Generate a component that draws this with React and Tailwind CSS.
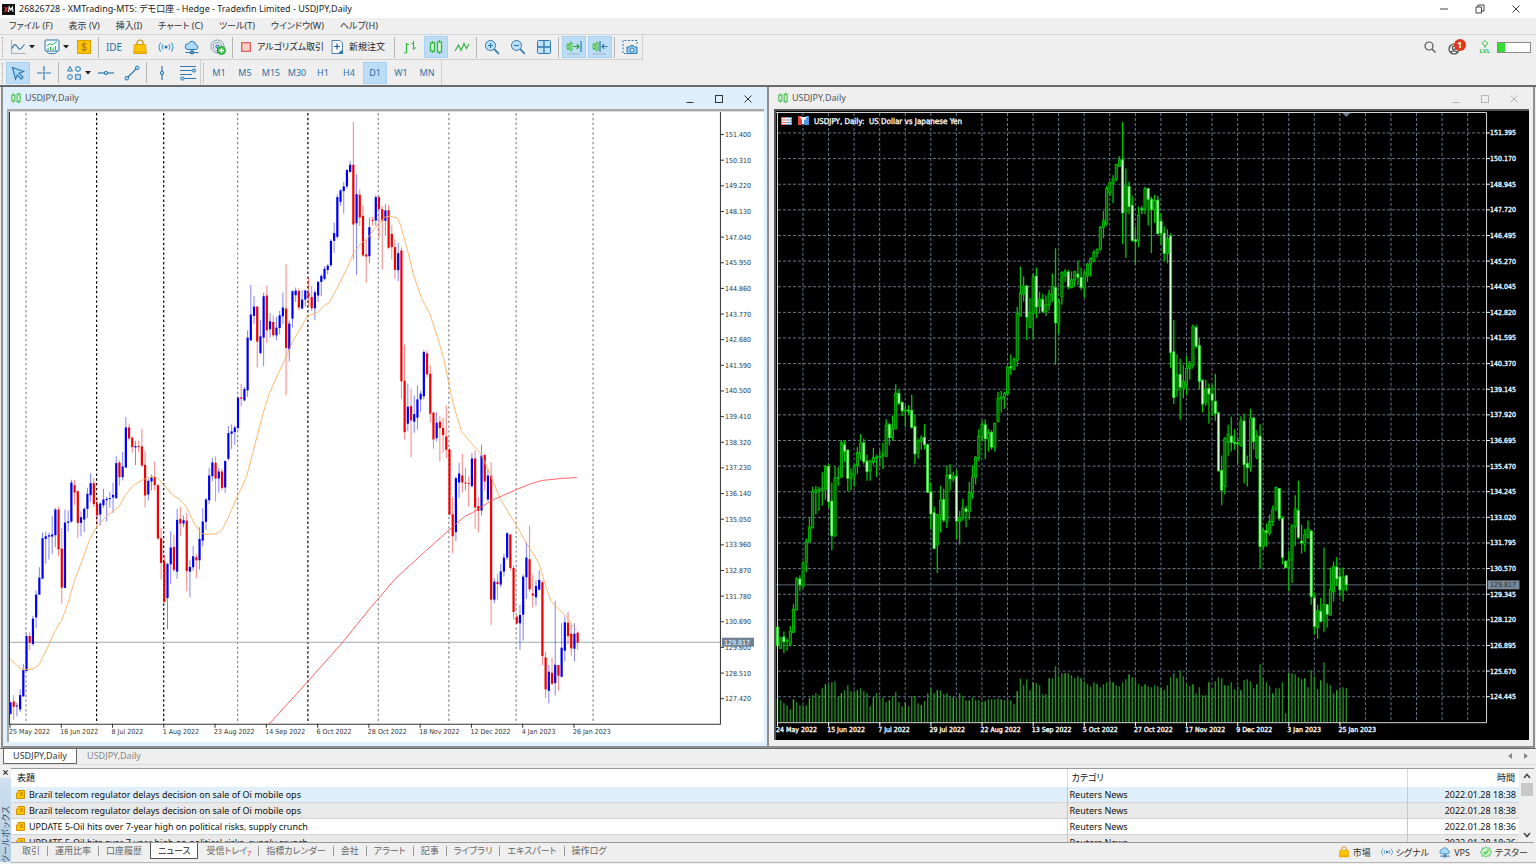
import React, { useState } from "react";

// one row per day, [high, open, close, low] in feed steps (70.5 steps = 1 yen, counted down from 152.44)
const candles = [
  [1731, 1740, 1800, 1811],
  [1773, 1810, 1775, 1810], [1753, 1772, 1788, 1827], [1775, 1787, 1784, 1817], [1735, 1796, 1753, 1804],
  [1660, 1757, 1678, 1757], [1570, 1681, 1576, 1681], [1564, 1576, 1596, 1618], [1515, 1600, 1524, 1605],
  [1440, 1520, 1452, 1553], [1370, 1452, 1401, 1452], [1266, 1404, 1283, 1406], [1263, 1285, 1277, 1359],
  [1266, 1278, 1274, 1347], [1217, 1278, 1272, 1330], [1192, 1274, 1197, 1310], [1189, 1197, 1316, 1337],
  [1252, 1314, 1431, 1479], [1197, 1432, 1236, 1432], [1200, 1237, 1233, 1263], [1108, 1233, 1116, 1237],
  [1108, 1124, 1146, 1183], [1140, 1142, 1237, 1282], [1203, 1237, 1220, 1277], [1190, 1227, 1195, 1265],
  [1132, 1195, 1150, 1222], [1088, 1154, 1118, 1175], [1103, 1118, 1181, 1190], [1159, 1179, 1215, 1245],
  [1175, 1212, 1179, 1245], [1135, 1184, 1167, 1192], [1158, 1169, 1165, 1233], [1143, 1166, 1163, 1192],
  [1117, 1161, 1153, 1207], [1037, 1163, 1058, 1165], [1050, 1056, 1100, 1126], [1025, 1100, 1068, 1110],
  [920, 1071, 951, 1073], [940, 951, 984, 990], [978, 982, 1010, 1027], [991, 1011, 1007, 1064],
  [991, 1007, 1010, 1025], [956, 1008, 1065, 1070], [1022, 1063, 1155, 1191], [1105, 1152, 1111, 1170],
  [1092, 1113, 1101, 1140], [1054, 1099, 1124, 1140], [1120, 1124, 1284, 1287], [1252, 1283, 1357, 1407],
  [1332, 1353, 1474, 1476], [1357, 1462, 1360, 1556], [1262, 1361, 1311, 1420], [1272, 1309, 1378, 1385],
  [1195, 1383, 1228, 1405], [1190, 1225, 1239, 1277], [1215, 1239, 1229, 1250], [1208, 1230, 1381, 1442],
  [1347, 1383, 1369, 1460], [1306, 1370, 1337, 1380], [1330, 1340, 1349, 1402], [1250, 1349, 1285, 1377],
  [1193, 1290, 1233, 1307], [1162, 1234, 1167, 1258], [1072, 1169, 1095, 1180], [1042, 1097, 1056, 1112],
  [1038, 1057, 1104, 1173], [1072, 1104, 1083, 1147], [1075, 1083, 1132, 1140], [1049, 1131, 1052, 1147],
  [946, 1045, 968, 1050], [942, 970, 963, 1015], [945, 965, 951, 1003], [858, 953, 862, 960],
  [820, 861, 865, 888], [830, 870, 836, 873], [660, 840, 682, 860], [524, 690, 613, 692],
  [557, 617, 589, 642], [587, 589, 694, 772], [630, 728, 678, 732], [547, 682, 558, 767],
  [527, 556, 660, 698], [608, 657, 633, 682], [615, 635, 675, 680], [620, 675, 652, 690],
  [602, 653, 615, 672], [547, 618, 592, 642], [462, 595, 713, 855], [632, 717, 640, 753],
  [540, 625, 543, 652], [532, 555, 541, 575], [534, 542, 592, 600], [540, 595, 568, 597],
  [538, 568, 541, 590], [503, 549, 559, 587], [528, 560, 594, 603], [538, 594, 546, 629],
  [512, 556, 515, 575], [492, 515, 497, 557], [468, 506, 476, 510], [462, 479, 466, 493],
  [387, 465, 392, 470], [337, 392, 369, 428], [253, 380, 261, 385], [237, 275, 241, 287],
  [216, 243, 229, 310], [177, 229, 180, 235], [152, 186, 164, 187], [36, 164, 343, 448],
  [193, 339, 252, 495], [237, 254, 322, 348], [285, 317, 436, 440], [388, 433, 439, 518],
  [322, 438, 351, 459], [320, 329, 332, 347], [255, 331, 261, 347], [258, 261, 297, 385],
  [288, 297, 332, 478], [282, 332, 301, 377], [285, 300, 413, 416], [345, 371, 411, 448],
  [388, 411, 479, 506], [398, 480, 429, 513], [412, 421, 813, 865], [703, 811, 965, 987],
  [820, 940, 889, 962], [835, 887, 930, 1040], [855, 934, 911, 967], [825, 922, 867, 957],
  [842, 867, 850, 905], [719, 858, 725, 867], [720, 729, 792, 800], [765, 790, 910, 937],
  [903, 907, 987, 1015], [905, 983, 937, 993], [918, 934, 953, 1053], [922, 953, 974, 1027],
  [885, 978, 1018, 1043], [1013, 1017, 1212, 1215], [1160, 1211, 1277, 1328], [1098, 1265, 1103, 1292],
  [1057, 1116, 1089, 1162], [1030, 1095, 1116, 1147], [1072, 1116, 1119, 1141], [1098, 1118, 1121, 1188],
  [1028, 1127, 1044, 1131], [1020, 1044, 1191, 1255], [1160, 1187, 1201, 1265], [1003, 1200, 1035, 1215],
  [1030, 1034, 1113, 1140], [1076, 1167, 1095, 1173], [1055, 1095, 1467, 1543], [1403, 1467, 1413, 1478],
  [1390, 1414, 1420, 1467], [1359, 1422, 1382, 1430], [1329, 1383, 1341, 1398], [1265, 1341, 1268, 1348],
  [1270, 1272, 1372, 1380], [1365, 1372, 1504, 1527], [1513, 1518, 1538, 1540], [1482, 1538, 1513, 1618],
  [1391, 1512, 1398, 1590], [1294, 1400, 1341, 1465], [1245, 1346, 1436, 1443], [1393, 1449, 1455, 1491],
  [1408, 1460, 1426, 1485], [1379, 1437, 1408, 1440], [1410, 1415, 1636, 1663], [1623, 1640, 1736, 1762],
  [1663, 1740, 1683, 1778], [1640, 1686, 1719, 1723], [1470, 1717, 1662, 1754], [1662, 1663, 1695, 1740],
  [1538, 1698, 1611, 1700], [1518, 1620, 1535, 1652], [1503, 1536, 1576, 1600], [1541, 1569, 1613, 1635],
  [1538, 1614, 1569, 1652], [1562, 1566, 1596, 1618],
];

const volumes = [
  24, 22, 19, 17, 13, 23, 20, 17, 17, 17, 24, 27, 29, 27, 34, 38, 38, 40, 41, 26, 29, 32, 37, 31, 31, 32, 34, 31, 29, 16,
  25, 29, 23, 25, 20, 22, 26, 30, 20, 16, 20, 16, 26, 26, 19, 17, 21, 29, 34, 29, 32, 32, 28, 29, 26, 25, 23, 29, 26, 22,
  22, 25, 22, 22, 21, 21, 23, 23, 23, 24, 23, 22, 23, 22, 18, 31, 44, 37, 43, 32, 40, 39, 37, 28, 28, 44, 44, 56, 46, 49,
  49, 49, 47, 44, 46, 44, 41, 38, 36, 40, 38, 35, 38, 40, 42, 40, 37, 36, 40, 43, 48, 45, 42, 38, 36, 38, 36, 35, 37, 36,
  34, 32, 37, 45, 49, 44, 52, 46, 39, 36, 38, 29, 35, 27, 27, 40, 34, 41, 45, 44, 37, 37, 40, 33, 36, 32, 42, 43, 41, 34,
  38, 58, 44, 40, 36, 29, 34, 34, 40, 9, 49, 49, 48, 45, 43, 44, 35, 52, 46, 33, 42, 60, 39, 37, 29, 32, 34, 35, 34,
];

const fastAverage =
  "1,547 8,554 14,558 24,557 30,553 38,537 46,519 53,508 59,491 66,467 73,449 81,427 88,415 98,404 110,395 116,384 124,374 134,368 143,365 148,366 155,374 164,384 171,388 178,397 184,410 191,421 196,423 208,422 213,418 219,406 228,385 237,366 243,343 254,301 260,282 269,262 276,247 284,229 298,205 308,201 314,195 320,191 328,176 338,156 344,142 351,133 359,126 368,114 375,106 381,105 388,107 391,114 398,139 404,164 412,187 420,202 428,226 434,247 439,271 444,294 452,320 461,331 471,342 478,357 483,369 491,388 508,416 517,432 529,451 535,471 541,489 546,495 557,505 562,513 567,518";
const slowAverage =
  "260,612 291,578 332,532 362,495 386,467 411,444 440,418 455,405 463,401 482,389 507,378 519,373 532,369 552,367 567,366";

const leftDates = ["25 May 2022", "16 Jun 2022", "8 Jul 2022", "1 Aug 2022", "23 Aug 2022", "14 Sep 2022", "6 Oct 2022", "28 Oct 2022", "18 Nov 2022", "12 Dec 2022", "4 Jan 2023", "26 Jan 2023"];
const rightDates = ["24 May 2022", "15 Jun 2022", "7 Jul 2022", "29 Jul 2022", "22 Aug 2022", "13 Sep 2022", "5 Oct 2022", "27 Oct 2022", "17 Nov 2022", "9 Dec 2022", "3 Jan 2023", "25 Jan 2023"];

const monthLines = [
  { x: 17, dark: false }, { x: 87.5, dark: true }, { x: 154.5, dark: true }, { x: 228.3, dark: false }, { x: 298.5, dark: true },
  { x: 368.8, dark: false }, { x: 439.3, dark: false }, { x: 506.5, dark: false }, { x: 583.3, dark: false },
];

const news = [
  { title: "Brazil telecom regulator delays decision on sale of Oi mobile ops", time: "2022.01.28 18:38", row: "bg-[#dfeffc]" },
  { title: "Brazil telecom regulator delays decision on sale of Oi mobile ops", time: "2022.01.28 18:38", row: "bg-[#e9e9e9]" },
  { title: "UPDATE 5-Oil hits over 7-year high on political risks, supply crunch", time: "2022.01.28 18:36", row: "bg-white" },
  { title: "UPDATE 5-Oil hits over 7-year high on political risks, supply crunch", time: "2022.01.28 18:36", row: "bg-[#e9e9e9]" },
];

const menus = ["ファイル (F)", "表示 (V)", "挿入(I)", "チャート (C)", "ツール(T)", "ウインドウ(W)", "ヘルプ(H)"];
const frames = ["M1", "M5", "M15", "M30", "H1", "H4", "D1", "W1", "MN"];
const panels = ["取引", "運用比率", "口座履歴", "ニュース", "受信トレイ", "指標カレンダー", "会社", "アラート", "記事", "ライブラリ", "エキスパート", "操作ログ"];
const steps = Array.from({ length: 23 }, (_, i) => i);

const BLUE = "#2f78b0";

function Icon({ children, size = "size-4" }) {
  return (
    <svg viewBox="0 0 16 16" className={`${size} shrink-0`} fill="none" stroke={BLUE} strokeWidth="1" aria-hidden="true">
      {children}
    </svg>
  );
}

const Bag = ({ size }) => (
  <Icon size={size}>
    <path d="M5 6V4a3 3 0 0 1 6 0v2" stroke="#d08a10" strokeWidth="1.2" />
    <path d="M2.5 5.5h11l.8 9H1.7z" fill="#fdc400" stroke="#e2a000" />
    <path d="M3 12.8h10.5" stroke="#f0a800" />
  </Icon>
);
const Signal = ({ size }) => (
  <Icon size={size}>
    <circle cx="8" cy="8" r="1.6" fill={BLUE} stroke="none" />
    <path d="M5.3 5.3a4 4 0 0 0 0 5.4M10.7 5.3a4 4 0 0 1 0 5.4M2.8 3.5a6.6 6.6 0 0 0 0 9M13.2 3.5a6.6 6.6 0 0 1 0 9" stroke="#4a9bd0" strokeWidth="1.1" />
  </Icon>
);
const Cloud = ({ size }) => (
  <Icon size={size}>
    <path d="M4 10.5a2.9 2.9 0 0 1 .2-5.8 4 4 0 0 1 7.6 1 2.5 2.5 0 0 1 .4 4.8z" fill="#a9dcfa" />
    <path d="M8 10.5v3M1.5 13.5h13" strokeWidth="1.2" />
    <rect x="6.5" y="12.3" width="3" height="2.4" fill="#5aa6d8" />
  </Icon>
);
const Candle = ({ size, color = "#35b83f" }) => (
  <Icon size={size}>
    <g stroke={color} strokeWidth="1.3">
      <path d="M4.5 2v2M4.5 12v2M11.5 1v2M11.5 13v2" />
      <rect x="2.5" y="4" width="4" height="8" fill="#d8f5d8" />
      <rect x="9.5" y="3" width="4" height="10" fill="#d8f5d8" />
    </g>
  </Icon>
);

function Caret() {
  return (
    <svg viewBox="0 0 6 4" className="h-1 w-1.5 shrink-0" aria-hidden="true">
      <path d="M0 0h6L3 3.6z" fill="#222" />
    </svg>
  );
}

function Tool({ label, active, wide, children }) {
  return (
    <button
      aria-label={label}
      className={`flex h-[22px] items-center justify-center border ${wide ? "w-8 gap-[3px]" : "w-6"} ${
        active ? "border-[#a9d2f2] bg-[#bddcf5]" : "border-transparent"
      }`}
    >
      {children}
    </button>
  );
}

const Rule = () => <span className="mr-[3px] ml-0.5 h-[21px] w-px bg-[#b4b4b4]" />;
const Grip = () => <span className="ml-0.5 h-5 w-1 border-l border-dotted border-[#a8a8a8]" />;

function TitleBar() {
  return (
    <header className="flex h-[18px] items-center bg-white pr-3.5 pl-0.5 text-[9px] text-[#222]">
      <svg viewBox="0 0 13 11" className="h-[11px] w-[13px]" aria-hidden="true">
        <rect width="13" height="11" fill="#111" />
        <path d="M2.5 3l3 5M5.5 3l-3 5" stroke="#e33" strokeWidth="1.1" />
        <path d="M6.5 8l.7-5 1.6 3 1.6-3 .6 5" stroke="#fff" strokeWidth="1.1" fill="none" />
      </svg>
      <h1 className="ml-1 whitespace-nowrap">26826728 - XMTrading-MT5: デモ口座 - Hedge - Tradexfin Limited - USDJPY,Daily</h1>
      <div className="ml-auto flex gap-6 text-[#444]">
        <WindowGlyph kind="min" label="最小化" />
        <WindowGlyph kind="restore" label="元に戻す" />
        <WindowGlyph kind="close" label="閉じる" />
      </div>
    </header>
  );
}

function WindowGlyph({ kind, label }) {
  return (
    <button aria-label={label} className="flex size-3 items-center justify-center">
      <svg viewBox="0 0 10 10" className="size-[10px]" fill="none" stroke="currentColor" strokeWidth="1" aria-hidden="true">
        {kind === "min" && <path d="M1 5h8" />}
        {kind === "low" && <path d="M1.5 8.5h7" />}
        {kind === "max" && <rect x="1.5" y="1.5" width="7" height="7" />}
        {kind === "restore" && <path d="M1 3h5.5v6H1zM3 3V1h6v6H6.5" />}
        {kind === "close" && <path d="M1.5 1.5l7 7M8.5 1.5l-7 7" />}
      </svg>
    </button>
  );
}

function MainToolbar() {
  return (
    <div className="flex h-[25px] items-start">
      <div className="flex h-[25px] items-center border-r border-b border-[#cfcfcf]">
        <Grip />
        <Tool label="ラインチャート" wide>
          <Icon><path d="M1.5 1v13.5H16" stroke="#a5b0b8" /><path d="M2 9.5c2-5 3.6-5 5.5-1.5s3 2.5 7-2.5" strokeWidth="1.2" /></Icon>
          <Caret />
        </Tool>
        <span className="w-0.5" />
        <Tool label="テンプレート" wide>
          <Icon>
            <rect x="1" y="1" width="14" height="11" rx="1" fill="#eef8ff" />
            <path d="M3 7l3-2.5 2 1.5 5-3.5" stroke="#35b83f" />
            <path d="M4 11V9M6.500 11V8M9 11V8.5M11.500 11V7" stroke="#35b83f" />
            <path d="M2.500 12c1 2 2 2.700 5.500 2.700s4.500-.7 5.500-2.700" />
          </Icon>
          <Caret />
        </Tool>
        <Tool label="マーケット">
          <Icon>
            <rect x="1.5" y="1.5" width="13" height="13" fill="#fdc400" stroke="#e2a000" />
            <path d="M10.500 5.500c-.7-1-4.500-1.300-4.500.7s4.500 1.200 4.500 3.300-4 1.900-5 .6M8 3.200v9.600" stroke="#a86a00" />
          </Icon>
        </Tool>
        <Rule />
        <div className="flex gap-0.5">
          <Tool label="IDE"><span className="text-[10px] text-[#2f6f9f]">IDE</span></Tool>
          <Tool label="ストア"><Bag /></Tool>
          <Tool label="シグナル配信"><Signal /></Tool>
          <Tool label="クラウド"><Cloud /></Tool>
          <Tool label="接続">
            <Icon>
              <circle cx="7.5" cy="7.5" r="6.5" stroke="#7f9fb0" />
              <circle cx="7.5" cy="7.5" r="4.2" stroke="#7f9fb0" />
              <circle cx="7.5" cy="7.5" r="1.7" fill="#7cc4ee" />
              <path d="M7.500 9v5" />
              <circle cx="11.5" cy="11.5" r="4" fill="#3fc24a" stroke="#2aa136" />
              <path d="M11.500 9v5M9 11.500h5" stroke="#fff" strokeWidth="1.3" />
            </Icon>
          </Tool>
        </div>
        <Rule />
        <button className="flex h-[22px] w-[90px] items-center gap-1.5 pl-[5px] text-[9px] whitespace-nowrap text-[#222]">
          <svg viewBox="0 0 10 10" className="size-[10px] shrink-0" aria-hidden="true"><rect x=".7" y=".7" width="8.6" height="8.6" fill="#fbd0cc" stroke="#dc5448" strokeWidth="1.2" /></svg>
          アルゴリズム取引
        </button>
        <button className="flex h-[22px] w-[66px] items-center gap-1 pl-[3px] text-[9px] whitespace-nowrap text-[#222]">
          <Icon>
            <path d="M3 1.500h8l2.500 2.500v10.500H3z" fill="#fff" stroke="#4a86b0" />
            <path d="M8 4.500v6M5 7.500h6" stroke="#2458a8" strokeWidth="1.2" />
            <path d="M9.500 14.500l4-3.500v3.500z" fill="#2f78b0" />
          </Icon>
          新規注文
        </button>
        <Rule />
        <div className="flex gap-0.5">
          <Tool label="バーチャート">
            <Icon><path d="M4.500 4v10M2 14h2.500M4.500 5.500H7M11.500 2v9M9.500 4.500h2M11.500 9H14" stroke="#35b83f" strokeWidth="1.2" /></Icon>
          </Tool>
          <Tool label="ローソク足" active><Candle /></Tool>
          <Tool label="ライン"><Icon><path d="M1 12l3.500-6 2.500 5.500 3-7 2.500 5L15 5" stroke="#35b83f" strokeWidth="1.2" /></Icon></Tool>
        </div>
        <Rule />
        <div className="flex gap-0.5">
          <Tool label="ズームイン">
            <Icon><circle cx="6.5" cy="6.5" r="5" fill="#bfe3fa" /><path d="M10.200 10.200l4.600 4.600" strokeWidth="1.7" /><path d="M6.500 4v5M4 6.500h5" strokeWidth="1.2" /></Icon>
          </Tool>
          <Tool label="ズームアウト">
            <Icon><circle cx="6.5" cy="6.5" r="5" fill="#bfe3fa" /><path d="M10.200 10.200l4.600 4.600" strokeWidth="1.7" /><path d="M4 6.500h5" strokeWidth="1.2" /></Icon>
          </Tool>
          <Tool label="タイル表示">
            <Icon><rect x="1.5" y="1.5" width="13" height="13" rx="1" fill="#bfe3fa" /><path d="M8 1.500v13M1.500 8h13" strokeWidth="1.3" /></Icon>
          </Tool>
        </div>
        <Rule />
        <div className="flex gap-0.5">
          <Tool label="自動スクロール" active>
            <Icon>
              <path d="M2 4v7M5 2.500v10" stroke="#35b83f" />
              <path d="M1 5.500h2v4H1zM4 4h2v7H4z" fill="#d8f5d8" stroke="#35b83f" />
              <path d="M7.500 7.500H13M10.800 5.200L13 7.500l-2.200 2.300" stroke="#25a030" strokeWidth="1.2" />
              <path d="M15 2v11" strokeWidth="1.2" />
              <path d="M1 15h13" stroke="#9db4c4" />
            </Icon>
          </Tool>
          <Tool label="チャートシフト" active>
            <Icon>
              <path d="M2 4v7M5 2.500v10" stroke="#35b83f" />
              <path d="M1 5.500h2v4H1zM4 4h2v7H4z" fill="#d8f5d8" stroke="#35b83f" />
              <path d="M8 2v11" strokeWidth="1.2" />
              <path d="M15.500 7.500H10M12.200 5.200L10 7.500l2.200 2.300" strokeWidth="1.2" />
              <path d="M1 15h13" stroke="#9db4c4" />
            </Icon>
          </Tool>
        </div>
        <Rule />
        <Tool label="スクリーンショット">
          <Icon>
            <path d="M4 14.500H1v-13h14v5" strokeDasharray="2 1.5" />
            <path d="M5 8h2.500l1-1.500h3l1 1.500H15v6.500H5z" fill="#8fcdf3" />
            <circle cx="10" cy="11" r="2" fill="#e8f6ff" />
          </Icon>
        </Tool>
      </div>
      <div className="mt-px mr-[5px] ml-auto flex h-[22px] items-center">
        <button aria-label="検索">
          <svg viewBox="0 0 12 12" className="size-3" fill="none" stroke="#555" strokeWidth="1.2"><circle cx="5" cy="5" r="4" /><path d="M8 8l3.500 3.500" /></svg>
        </button>
        <button aria-label="アカウント" className="relative ml-3 h-4 w-[18px]">
          <svg viewBox="0 0 12 12" className="mt-1 size-3" fill="none" stroke="#444" strokeWidth="1.2"><circle cx="6" cy="6" r="5" /><circle cx="6" cy="4.8" r="1.7" /><path d="M2.500 9.500c1.500-2.300 5.500-2.300 7 0" /></svg>
          <span className="absolute top-0 right-0 flex size-3 items-center justify-center rounded-full bg-[#e03a1e] text-[9px] font-bold text-white">1</span>
        </button>
        <div className="ml-3.5 flex flex-col items-center text-[6px] leading-[6px] font-bold text-[#2fbf3a]">
          <svg viewBox="0 0 8 8" className="size-2" fill="none" stroke="#2fbf3a"><path d="M4 .5L7 3.500 4 6 1 3.500zM4 6v2" /></svg>
          LVL
        </div>
        <div className="ml-[7px] h-[11px] w-[34px] border border-[#888] bg-white">
          <div className="h-full w-[7px] bg-[#35dc35]" />
        </div>
      </div>
    </div>
  );
}

function DrawToolbar() {
  const [frame, setFrame] = useState("D1");
  return (
    <div className="flex h-[25px]">
      <div className="flex items-center border-r border-[#cfcfcf]">
        <Grip />
        <div className="flex gap-0.5">
          <Tool label="カーソル" active>
            <Icon><path d="M2.500 2.500l11 4-4.500 1.800 4 4-1.800 1.800-4-4-1.600 4z" fill="#a9dcfa" strokeWidth="1.2" /></Icon>
          </Tool>
          <Tool label="クロスヘア"><Icon><path d="M8 1v5.500M8 9.500V15M1 8h5.500M9.500 8H15M7 8h2M8 7v2" strokeWidth="1.2" /></Icon></Tool>
        </div>
        <Rule />
        <Tool label="図形" wide>
          <Icon>
            <path d="M4 1.500L6.500 6h-5z" fill="#cfeafc" />
            <circle cx="12" cy="4" r="2.4" fill="#cfeafc" />
            <circle cx="4" cy="12" r="2.4" fill="#cfeafc" />
            <rect x="9.7" y="9.7" width="4.6" height="4.6" fill="#cfeafc" />
          </Icon>
          <Caret />
        </Tool>
        <div className="flex gap-0.5">
          <Tool label="水平線"><Icon><path d="M0 8h16" strokeWidth="1.2" /><circle cx="8" cy="8" r="1.7" fill="#a9dcfa" /></Icon></Tool>
          <Tool label="トレンドライン"><Icon><path d="M3 13L13 3" strokeWidth="1.2" /><circle cx="13.2" cy="2.8" r="1.8" fill="#a9dcfa" /><circle cx="2.8" cy="13.2" r="1.8" fill="#a9dcfa" /></Icon></Tool>
        </div>
        <Rule />
        <div className="flex gap-0.5">
          <Tool label="垂直線"><Icon><path d="M8 1v14" strokeWidth="1.2" /><circle cx="8" cy="8" r="1.7" fill="#a9dcfa" /></Icon></Tool>
          <Tool label="フィボナッチ">
            <Icon><path d="M0 1.500h16M0 5.500h16M0 9.500h12M0 13.500h16" /><circle cx="14" cy="5.5" r="1.6" fill="#a9dcfa" /><circle cx="2.5" cy="13.5" r="1.6" fill="#a9dcfa" /></Icon>
          </Tool>
        </div>
        <span className="h-full w-px bg-[#cfcfcf]" />
        <Grip />
        <div className="flex gap-0.5 pr-0.5">
          {frames.map((f) => (
            <button
              key={f}
              onClick={() => setFrame(f)}
              className={`h-[22px] w-6 border text-center text-[9px] text-[#2f6f9f] ${
                f === frame ? "border-[#a9d2f2] bg-[#bddcf5]" : "border-transparent"
              }`}
            >
              {f}
            </button>
          ))}
        </div>
      </div>
    </div>
  );
}

function ChartWindow({ active, children }) {
  return (
    <section className={`min-w-0 flex-1 border-r-2 border-b-2 border-[#8f8f8f] pb-1 ${active ? "border-l-2 bg-[#dfeffc]" : "bg-[#efefef]"}`}>
      <div className={`flex h-[22px] items-center pr-[13px] text-[9px] text-[#555] ${active ? "pl-[7px]" : "pl-2"}`}>
        <Candle size="size-3" />
        <h2 className="ml-[3px]">USDJPY,Daily</h2>
        <div className={`ml-auto flex gap-[17px] pt-0.5 ${active ? "text-[#333]" : "text-[#b5b5b5]"}`}>
          <WindowGlyph kind="low" label="最小化" />
          <WindowGlyph kind="max" label="最大化" />
          <WindowGlyph kind="close" label="閉じる" />
        </div>
      </div>
      <div className={`border-t-2 border-l-2 ${active ? "mr-[3px] ml-1 border-[#a8a8a8]" : "mr-1 ml-[5px] border-[#555]"}`}>{children}</div>
    </section>
  );
}

function LightChart() {
  const y = (v) => v / 3 - 1;
  return (
    <svg viewBox="0 0 754 630" className="block h-auto w-full bg-white text-[7px]" role="img" aria-label="USDJPY 日足 明色">
      {monthLines.map((l) => (
        <path key={l.x} d={`M${l.x} 2V612`} stroke={l.dark ? "#000" : "#8c8c8c"} strokeWidth="1.2" strokeDasharray="2.4 2.4" />
      ))}
      <path d="M0 530.500H711" stroke="#9aa8b4" />
      {candles.slice(1).map(([h, o, c, l], i) => {
        const x = 1.5 + i * 3.2;
        const color = c < o ? "#0000f0" : "#f00000";
        return (
          <g key={i}>
            <path d={`M${x} ${y(h)}V${y(l)}`} stroke={color} strokeWidth=".7" strokeOpacity=".7" />
            <rect x={x - 1.1} y={y(Math.min(o, c))} width="2.2" height={Math.max(Math.abs(o - c) / 3, 1)} fill={color} />
          </g>
        );
      })}
      <polyline points={fastAverage} fill="none" stroke="#ffb060" strokeWidth=".9" />
      <polyline points={slowAverage} fill="none" stroke="#f55" strokeWidth=".9" />
      <path d="M0 .5H754" stroke="#dcdcdc" />
      <path d="M.5 1V612.500H710.500V1" fill="none" stroke="#333" strokeWidth="1" />
      <g fill="#333" className="font-['DejaVu_Sans_Condensed','DejaVu_Sans',sans-serif]">
        {steps.map((k) => (
          <g key={k}>
            <path d={`M711 ${23.5 + k * 25.61}h3`} stroke="#333" />
            <text x="715" y={26 + k * 25.61}>{(151.4 - k * 1.09).toFixed(3)}</text>
          </g>
        ))}
        {leftDates.map((d, i) => (
          <g key={d}>
            <path d={`M${1 + i * 51.2} 612v4`} stroke="#333" />
            <text x={i * 51.2} y="622">{d}</text>
          </g>
        ))}
      </g>
      <rect x="712" y="526" width="32" height="9" fill="#6f8295" />
      <text x="714" y="533" fill="#fff" className="font-['DejaVu_Sans_Condensed','DejaVu_Sans',sans-serif]">129.817</text>
    </svg>
  );
}

function DarkChart() {
  const y = (v) => 22 + (v / 3 - 24.5) * 0.8915;
  return (
    <svg viewBox="0 0 754 630" className="block h-auto w-full bg-black text-[7px]" role="img" aria-label="USDJPY 日足 暗色">
      <g stroke="#68788a" strokeDasharray="3 2" strokeWidth="1">
        {steps.map((k) => <path key={k} d={`M2 ${22 + k * 25.66}H711`} />)}
        {Array.from({ length: 27 }, (_, k) => <path key={k} d={`M${27 + k * 25.6} 2V612`} />)}
      </g>
      {volumes.map((v, i) => (
        <path key={i} d={`M${1.5 + i * 3.2} 612V${612 - v}`} stroke={i % 5 === 0 ? "#2fb52f" : "#1f8a1f"} strokeWidth="1.4" />
      ))}
      <path d="M0 474.500H711" stroke="#5c6a76" />
      {candles.map(([h, o, c, l], i) => {
        const x = 1.5 + i * 3.2;
        const up = c < o;
        return (
          <g key={i}>
            <path d={`M${x} ${y(h)}V${y(l)}`} stroke="#00c400" strokeWidth="1.3" />
            <rect
              x={x - 1.1}
              y={y(Math.min(o, c))}
              width="2.2"
              height={Math.max((Math.abs(o - c) / 3) * 0.8915, 1)}
              fill={up ? "#006800" : "#d0ffd0"}
              stroke={up ? "#00c800" : "#20e020"}
              strokeWidth=".8"
            />
          </g>
        );
      })}
      <path d="M0 1.500H711.500V612.500H1.500V1" fill="none" stroke="#d8d8d8" />
      <path d="M567 2h8l-4 4z" fill="#6b7c8c" />
      <g fill="#fff" className="font-['DejaVu_Sans_Condensed','DejaVu_Sans',sans-serif]" stroke="#fff" strokeWidth=".3">
        {steps.map((k) => (
          <g key={k}>
            <path d={`M711 ${22 + k * 25.66}h4`} strokeWidth="1" />
            <text x="715" y={24.5 + k * 25.66}>{(151.395 - k * 1.225).toFixed(3)}</text>
          </g>
        ))}
        {rightDates.map((d, i) => (
          <g key={d}>
            <path d={`M${1.5 + i * 51.2} 612v4`} strokeWidth="1" />
            <text x={i * 51.2} y="622">{d}</text>
          </g>
        ))}
        <text x="38" y="13" className="text-[8px]">USDJPY, Daily:&#160; US Dollar vs Japanese Yen</text>
      </g>
      <rect x="712.5" y="470" width="32" height="9" fill="#778899" />
      <text x="715" y="477" fill="#26323c" className="font-['DejaVu_Sans_Condensed','DejaVu_Sans',sans-serif]">129.817</text>
      <rect x="5" y="6" width="11" height="8" fill="#fff" />
      <path d="M5 6.500h5.500M5 9h5.500M5 11.500h5.500M5.500 6v8M5 13.500h5.500" stroke="#e8605a" />
      <path d="M10.500 6.500H16M10.500 9H16M10.500 11.500H16M15.500 6v8M10.500 13.500H16" stroke="#5a94d0" />
      <path d="M22 5h4v9h-4z" fill="#e0483c" />
      <path d="M28 14V9l2-4h3v9z" fill="#4a9be0" />
      <path d="M24 6h7l-2 3h-1v4h-2V9z" fill="#fff" />
    </svg>
  );
}

function Toolbox() {
  const [panel, setPanel] = useState("ニュース");
  return (
    <div className="mt-[3px] flex">
      <aside className="flex w-[11px] shrink-0 flex-col items-center">
        <button aria-label="閉じる" className="flex h-2.5 items-center">
          <svg viewBox="0 0 6 6" className="size-[5px]" stroke="#222" strokeWidth="1.3"><path d="M.5.5l5 5M5.500.5l-5 5" /></svg>
        </button>
        <div className="flex h-[84px] w-full items-start justify-center overflow-hidden bg-linear-to-b from-[#cfe0f0] to-[#b4cde2] pt-7 text-[9px] leading-[10px] text-[#3a5068]">
          <span className="rotate-180 whitespace-nowrap [text-orientation:sideways] [writing-mode:vertical-rl]">ツールボックス</span>
        </div>
      </aside>
      <div className="min-w-0 flex-1">
        <div className="mr-0.5 flex h-[75px] overflow-hidden border-y border-[#9a9a9a] bg-white">
          <div className="min-w-0 flex-1 overflow-hidden">
            <table className="w-full table-fixed border-collapse text-[9px] text-[#111]">
              <colgroup>
                <col />
                <col className="w-[340px]" />
                <col className="w-[112px]" />
              </colgroup>
              <thead>
                <tr className="h-[18px] text-left">
                  <th className="pl-[6px] font-normal">表題</th>
                  <th className="border-l border-[#d8d8d8] pl-1 font-normal">カテゴリ</th>
                  <th className="border-l border-[#d8d8d8] pr-1 text-right font-normal">時間</th>
                </tr>
              </thead>
              <tbody>
                {news.map((n, i) => (
                  <tr key={i} className={`h-4 border-b border-[#d4d4d4] leading-[14px] whitespace-nowrap ${n.row}`}>
                    <td className="pl-[5px]">
                      <span className="flex items-center gap-1">
                        <svg viewBox="0 0 9 9" className="size-[9px]" aria-hidden="true">
                          <path d="M2 .5h6.500v8H.5V3H2z" fill="#fdc400" stroke="#d89400" />
                          <path d="M4 3h3M4 5h3" stroke="#a86a00" strokeWidth=".8" />
                        </svg>
                        {n.title}
                      </span>
                    </td>
                    <td className="border-l border-[#c8c8c8] pl-0.5">Reuters News</td>
                    <td className="border-l border-[#c8c8c8] pr-[3px] text-right">{n.time}</td>
                  </tr>
                ))}
              </tbody>
            </table>
          </div>
          <div className="flex w-[15px] flex-col items-center justify-between bg-[#efefef] py-1">
            <svg viewBox="0 0 8 6" className="h-1.5 w-2" fill="none" stroke="#444" strokeWidth="1.5"><path d="M1 5l3-3.500L7 5" /></svg>
            <div className="mt-1 mb-auto h-[13px] w-3 bg-[#c8c8c8]" />
            <svg viewBox="0 0 8 6" className="h-1.5 w-2" fill="none" stroke="#444" strokeWidth="1.5"><path d="M1 1l3 3.500L7 1" /></svg>
          </div>
        </div>
        <div className="flex h-5 items-start border-b border-[#b8b8b8] pr-2 text-[9px] text-[#666]">
          <nav className="flex h-4 items-center pl-1">
            {panels.map((p, i) => (
              <div key={p} className="flex h-full items-center">
                {i > 0 && <span className={`h-2.5 w-px ${p === panel || panels[i - 1] === panel ? "" : "bg-[#999]"}`} />}
                <button
                  onClick={() => setPanel(p)}
                  className={`h-full px-[7px] whitespace-nowrap ${p === panel ? "border border-t-0 border-[#555] bg-white text-[#222]" : ""}`}
                >
                  {p}
                  {p === "受信トレイ" && <sub className="text-[7px] text-red-500">7</sub>}
                </button>
              </div>
            ))}
          </nav>
          <div className="ml-auto flex h-[19px] items-center gap-[10px] whitespace-nowrap text-[#333]">
            <a href="#market" className="flex items-center gap-[3px]"><Bag size="size-3" />市場</a>
            <a href="#signals" className="flex items-center gap-[3px]"><Signal size="size-3" />シグナル</a>
            <a href="#vps" className="flex items-center gap-[3px]"><Cloud size="size-3" />VPS</a>
            <a href="#tester" className="flex items-center gap-[3px]">
              <Icon size="size-3">
                <path d="M8 1l2 2 3-.5.5 3L15.500 8l-2 2.500-.5 3-3-.5-2 2-2-2-3 .5-.5-3L.5 8l2-2.500.5-3 3 .5z" fill="#c8f2cc" stroke="#35b83f" />
                <path d="M5 8l2 2.500L11.500 5.500" stroke="#35b83f" strokeWidth="1.5" />
              </Icon>
              テスター
            </a>
          </div>
        </div>
      </div>
    </div>
  );
}

export default function App() {
  return (
    <div className="min-h-screen overflow-hidden bg-[#efefef] font-['Noto_Sans','Noto_Sans_CJK_JP',sans-serif] [font-feature-settings:'palt']">
      <TitleBar />
      <nav className="flex h-[17px] items-center border-b border-[#d4d4d4] pl-px text-[9px] text-[#333]">
        {menus.map((m) => (
          <button key={m} className="px-2 whitespace-nowrap">{m}</button>
        ))}
      </nav>
      <MainToolbar />
      <DrawToolbar />
      <main className="flex border-t-2 border-b border-[#6a6a6a] px-px">
        <ChartWindow active><LightChart /></ChartWindow>
        <ChartWindow><DarkChart /></ChartWindow>
      </main>
      <nav className="flex h-4 items-start border-b border-[#dcdcdc] pl-[3px] text-[9px] text-[#888]">
        <button className="h-[15px] w-[74px] border border-t-0 border-[#666] bg-white leading-[14px] text-[#333]">USDJPY,Daily</button>
        <button className="h-[15px] w-[74px] leading-[14px]">USDJPY,Daily</button>
        <div className="ml-auto flex h-full items-center gap-3 pr-2">
          <svg viewBox="0 0 4 6" className="h-1.5 w-1" fill="#888"><path d="M4 0v6L0 3z" /></svg>
          <svg viewBox="0 0 4 6" className="h-1.5 w-1" fill="#888"><path d="M0 0v6l4-3z" /></svg>
        </div>
      </nav>
      <Toolbox />
    </div>
  );
}
